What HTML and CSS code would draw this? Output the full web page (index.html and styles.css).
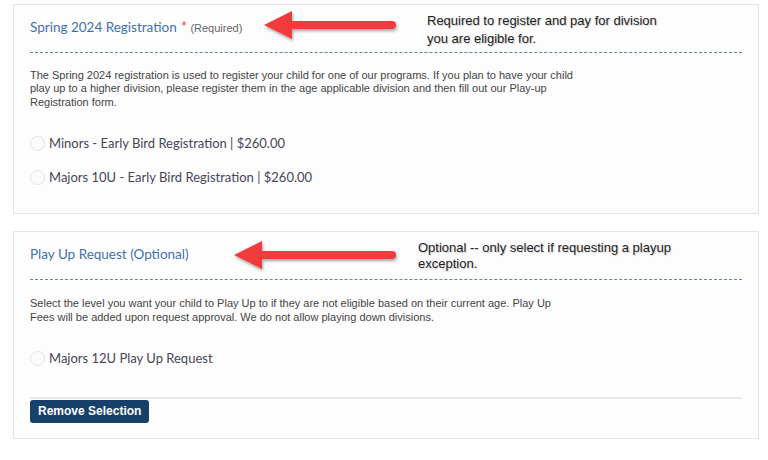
FILE: index.html
```
<!DOCTYPE html>
<html>
<head>
<meta charset="utf-8">
<link rel="stylesheet" href="styles.css">
</head>
<body>
<div class="page">
  <section class="card">
    <div class="card-head">
      <span class="title">Spring 2024 Registration</span>
      <span class="req-star">*</span>
      <span class="req">(Required)</span>
    </div>
    <p class="desc">The Spring 2024 registration is used to register your child for one of our programs. If you plan to have your child<br>play up to a higher division, please register them in the age applicable division and then fill out our Play-up<br>Registration form.</p>
    <div class="options">
      <label class="option"><span class="radio"></span>Minors - Early Bird Registration | $260.00</label>
      <label class="option"><span class="radio"></span>Majors 10U - Early Bird Registration | $260.00</label>
    </div>
    <div class="callout callout-1">
      <svg class="arrow" width="140" height="40" viewBox="0 0 140 40">
        <defs>
          <filter id="sh1" x="-20%" y="-40%" width="140%" height="180%">
            <feDropShadow dx="1" dy="2" stdDeviation="1.5" flood-color="#000" flood-opacity="0.35"/>
          </filter>
        </defs>
        <g filter="url(#sh1)" fill="#f23a3d" stroke="#f23a3d">
          <line x1="28" y1="20" x2="130" y2="20" stroke-width="8" stroke-linecap="round"/>
          <polygon points="2,20 30,6 30,34" stroke="none"/>
        </g>
      </svg>
      <div class="note">Required to register and pay for division<br>you are eligible for.</div>
    </div>
  </section>

  <section class="card">
    <div class="card-head">
      <span class="title">Play Up Request (Optional)</span>
    </div>
    <p class="desc desc-loose">Select the level you want your child to Play Up to if they are not eligible based on their current age. Play Up<br>Fees will be added upon request approval. We do not allow playing down divisions.</p>
    <div class="options">
      <label class="option"><span class="radio"></span>Majors 12U Play Up Request</label>
    </div>
    <div class="actions">
      <button class="btn">Remove Selection</button>
    </div>
    <div class="callout callout-2">
      <svg class="arrow" width="170" height="40" viewBox="0 0 170 40">
        <defs>
          <filter id="sh2" x="-20%" y="-40%" width="140%" height="180%">
            <feDropShadow dx="1" dy="2" stdDeviation="1.5" flood-color="#000" flood-opacity="0.35"/>
          </filter>
        </defs>
        <g filter="url(#sh2)" fill="#f23a3d" stroke="#f23a3d">
          <line x1="28" y1="20" x2="160" y2="20" stroke-width="8" stroke-linecap="round"/>
          <polygon points="2,20 30,6 30,34" stroke="none"/>
        </g>
      </svg>
      <div class="note">Optional -- only select if requesting a playup<br>exception.</div>
    </div>
  </section>
</div>
</body>
</html>
```
FILE: styles.css
```
html, body {
  margin: 0;
  padding: 0;
  background: #ffffff;
}

.page {
  padding: 4px 9px 0 13px;
  display: flex;
  flex-direction: column;
  gap: 17px;
}

.card {
  position: relative;
  background: #fdfdfd;
  border: 1px solid #e4e4e4;
  padding: 13px 16px 0;
}

.card-head {
  height: 18px;
  line-height: 18px;
  padding-bottom: 16px;
  border-bottom: 1px dashed #5f84ad;
  display: flex;
  align-items: baseline;
}

.title {
  font-family: Lato, "Open Sans", sans-serif;
  font-size: 13.5px;
  color: #3f71b2;
}

.req-star {
  font-family: Arial, "Liberation Sans", sans-serif;
  color: #e53935;
  font-size: 12px;
  margin-left: 5px;
  position: relative;
  top: -2px;
}

.req {
  font-family: "Liberation Sans", Arial, sans-serif;
  font-size: 11px;
  color: #666;
  margin-left: 4px;
}

.desc {
  margin: 16px 0 0;
  font-family: "Liberation Sans", Arial, sans-serif;
  font-size: 11px;
  line-height: 13.3px;
  color: #444;
}

.desc-loose {
  line-height: 14px;
}

.options {
  display: flex;
  flex-direction: column;
  gap: 14px;
  margin-top: 24px;
  padding-bottom: 26px;
}

.option {
  display: flex;
  align-items: center;
  height: 20px;
  font-family: Lato, "Open Sans", sans-serif;
  font-size: 13px;
  color: #474656;
}

.radio {
  width: 13px;
  height: 13px;
  border: 1px solid #e3e3e3;
  border-radius: 50%;
  background: #fbfbfb;
  margin-right: 4px;
  flex: none;
  position: relative;
  top: 1px;
}

.actions {
  border-top: 2px solid #e9e9e9;
  margin-top: 3px;
  padding: 1px 0 15px;
}

.btn {
  display: block;
  height: 23px;
  padding: 0 8px;
  border: none;
  border-radius: 3px;
  background: #17406b;
  color: #ffffff;
  font-family: "Liberation Sans", Arial, sans-serif;
  font-weight: bold;
  font-size: 12px;
  cursor: pointer;
}

.callout {
  position: absolute;
  display: flex;
  align-items: flex-start;
}

.callout-1 {
  left: 248px;
  top: 0px;
}

.callout-2 {
  left: 218px;
  top: 3px;
}

.arrow {
  display: block;
  flex: none;
}

.note {
  font-family: "Liberation Sans", Arial, sans-serif;
  font-size: 13px;
  color: #222;
  text-shadow: 1px 1px 1px rgba(0,0,0,0.18);
}

.callout-1 .note {
  line-height: 18px;
  margin-left: 25px;
  margin-top: 7px;
}

.callout-2 .note {
  line-height: 16px;
  margin-left: 16px;
  margin-top: 5px;
}
```
